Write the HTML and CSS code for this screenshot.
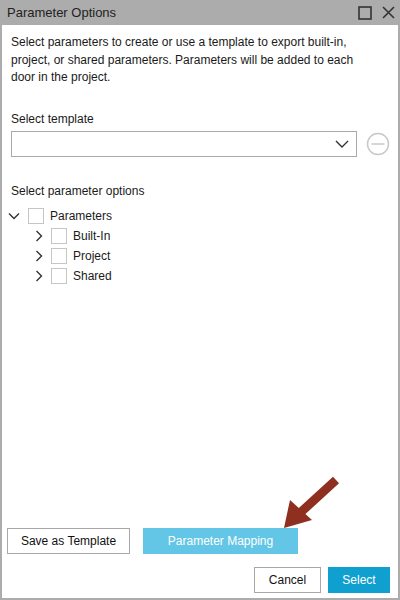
FILE: index.html
```html
<!DOCTYPE html>
<html lang="en">
<head>
    <meta charset="UTF-8">
    <title>Parameter Options</title>
    <link rel="stylesheet" href="styles.css">
</head>
<body>
<div class="window">
    <div class="titleBar">
        <span class="title">Parameter Options</span>
        <div class="titleIcons">
            <svg width="14" height="14" viewBox="0 0 14 14"><rect x="1" y="1" width="12" height="12" fill="none" stroke="#333" stroke-width="1.6"/></svg>
            <svg width="13" height="13" viewBox="0 0 13 13"><path d="M1 1 L12 12 M12 1 L1 12" stroke="#333" stroke-width="1.6"/></svg>
        </div>
    </div>
    <div class="content">
        <p class="intro">Select parameters to create or use a template to export built-in, project, or shared parameters. Parameters will be added to each door in the project.</p>

        <div class="label">Select template</div>
        <div class="templateRow">
            <div class="selectBox">
                <svg width="14" height="8" viewBox="0 0 14 8"><path d="M1 1 L7 7 L13 1" fill="none" stroke="#333" stroke-width="1.4"/></svg>
            </div>
            <svg class="removeIcon" width="24" height="24" viewBox="0 0 24 24"><circle cx="12" cy="12" r="10.5" fill="none" stroke="#c8c8c8" stroke-width="1.5"/><path d="M5.5 12 H18.5" stroke="#c8c8c8" stroke-width="1.5"/></svg>
        </div>

        <div class="label optionsLabel">Select parameter options</div>
        <div class="tree">
            <div class="treeRow">
                <svg class="chevron" width="12" height="12" viewBox="0 0 12 12"><path d="M1 3.5 L6 8.5 L11 3.5" fill="none" stroke="#333" stroke-width="1.4"/></svg>
                <span class="check"></span>
                <span>Parameters</span>
            </div>
            <div class="treeRow child">
                <svg class="chevron" width="12" height="12" viewBox="0 0 12 12"><path d="M3.5 1 L8.5 6 L3.5 11" fill="none" stroke="#333" stroke-width="1.4"/></svg>
                <span class="check"></span>
                <span>Built-In</span>
            </div>
            <div class="treeRow child">
                <svg class="chevron" width="12" height="12" viewBox="0 0 12 12"><path d="M3.5 1 L8.5 6 L3.5 11" fill="none" stroke="#333" stroke-width="1.4"/></svg>
                <span class="check"></span>
                <span>Project</span>
            </div>
            <div class="treeRow child">
                <svg class="chevron" width="12" height="12" viewBox="0 0 12 12"><path d="M3.5 1 L8.5 6 L3.5 11" fill="none" stroke="#333" stroke-width="1.4"/></svg>
                <span class="check"></span>
                <span>Shared</span>
            </div>
        </div>

        <div class="footer">
            <div class="buttonRow">
                <button type="button" class="btn btnOutline">Save as Template</button>
                <button type="button" class="btn btnLight">Parameter Mapping</button>
            </div>
            <div class="buttonRow right">
                <button type="button" class="btn btnOutline cancel">Cancel</button>
                <button type="button" class="btn btnPrimary">Select</button>
            </div>
        </div>
    </div>
    <svg class="arrow" width="70" height="70" viewBox="0 0 70 70">
        <path d="M62 8 L27 40" stroke="#8f2f20" stroke-width="9" stroke-linecap="butt"/>
        <path d="M10 56 L16 28 L38 48 Z" fill="#8f2f20"/>
    </svg>
</div>
</body>
</html>
```

FILE: styles.css
```css
* {
    box-sizing: border-box;
}

body {
    margin: 0;
    font-family: "Liberation Sans", Arial, sans-serif;
    font-size: 12px;
    color: #1a1a1a;
}

.window {
    position: relative;
    width: 400px;
    height: 600px;
    border: 2px solid #acacac;
    border-top: none;
    display: flex;
    flex-direction: column;
    background: #fff;
}

.titleBar {
    height: 25px;
    background: #acacac;
    margin: 0 -2px;
    padding: 0 5px 0 7px;
    display: flex;
    align-items: center;
    justify-content: space-between;
}

.title {
    font-size: 13px;
    color: #222;
}

.titleIcons {
    display: flex;
    align-items: center;
    gap: 10px;
}

.content {
    flex: 1;
    display: flex;
    flex-direction: column;
    padding: 9px 8px 5px 9px;
}

.intro {
    margin: 0;
    line-height: 17.5px;
    padding-right: 20px;
}

.label {
    margin-top: 24px;
    line-height: 17px;
}

.optionsLabel {
    margin-top: 26px;
}

.templateRow {
    display: flex;
    align-items: center;
    gap: 9px;
    margin-top: 3px;
}

.selectBox {
    width: 346px;
    height: 26px;
    border: 1px solid #ababab;
    display: flex;
    align-items: center;
    justify-content: flex-end;
    padding-right: 7px;
}

.tree {
    margin-top: 6px;
    margin-left: -3px;
}

.treeRow {
    height: 20px;
    display: flex;
    align-items: center;
}

.treeRow.child {
    padding-left: 25px;
}

.chevron {
    margin-right: 8px;
}

.treeRow.child .chevron {
    margin-right: 6px;
}

.check {
    width: 16px;
    height: 16px;
    border: 1px solid #c6c6c6;
    margin-right: 6px;
}

.footer {
    margin-top: auto;
}

.buttonRow {
    display: flex;
    gap: 13px;
    margin-left: -4px;
    margin-top: -1px;
}

.buttonRow.right {
    justify-content: flex-end;
    gap: 7px;
    margin-top: 13px;
    margin-left: 0;
}

.btn {
    font-family: "Liberation Sans", Arial, sans-serif;
    font-size: 12px;
    height: 26px;
    border: none;
    padding: 0;
    background: #fff;
    color: #111;
}

.btnOutline {
    border: 1px solid #a8a8a8;
    width: 123px;
}

.btnOutline.cancel {
    width: 67px;
}

.btnLight {
    width: 155px;
    background: #63c6e6;
    color: #fff;
}

.btnPrimary {
    width: 62px;
    background: #0fa0d0;
    color: #fff;
}

.arrow {
    position: absolute;
    left: 272px;
    top: 472px;
}
```
